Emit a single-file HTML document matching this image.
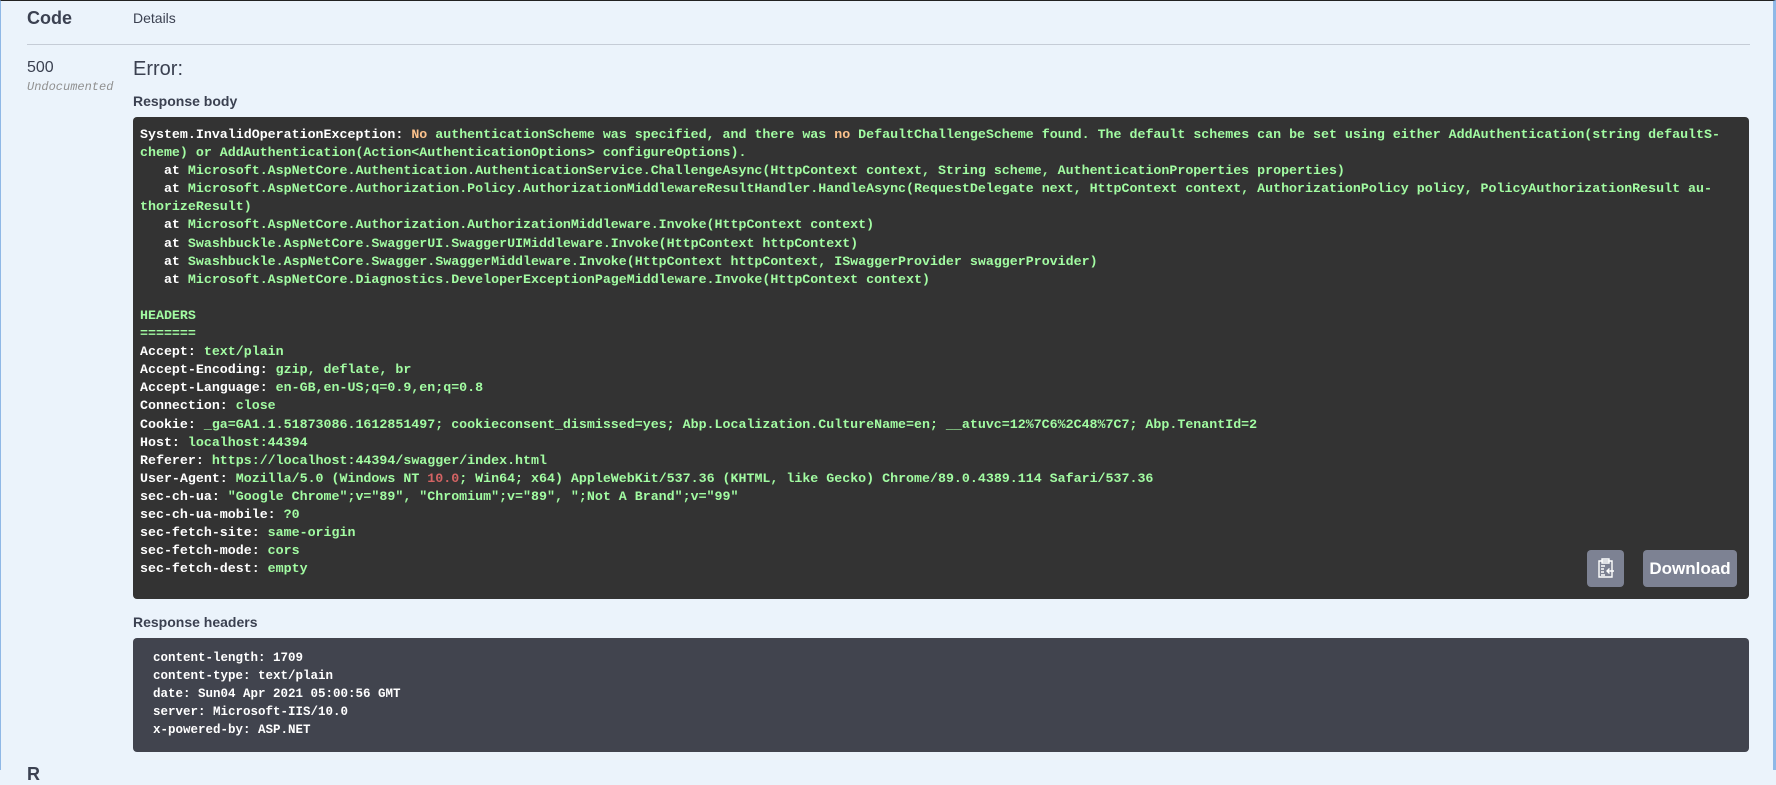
<!DOCTYPE html>
<html><head><meta charset="utf-8"><style>
*{margin:0;padding:0;box-sizing:border-box}
html,body{width:1776px;height:770px;overflow:hidden;background:#ebf3fb;font-family:"Liberation Sans",sans-serif;color:#3b4151}
.frame{position:absolute;left:0;top:0;width:1776px;height:770px;border-top:1px solid #222;border-left:1px solid #8fb8e6;border-right:3px solid #8fb8e6}
.abs{position:absolute}
pre{font-family:"Liberation Mono",monospace;font-weight:bold;font-size:13.3px;line-height:18.1px;white-space:pre}
.w{color:#fff}.g{color:#a2fca2}.o{color:#fcc28c}.r{color:#d36363}
</style></head><body>
<div class="frame"></div>
<div class="abs" style="left:27px;top:8px;font-size:18px;font-weight:bold">Code</div>
<div class="abs" style="left:133px;top:10px;font-size:14px">Details</div>
<div class="abs" style="left:27px;top:44px;width:1723px;height:1px;background:#c5ccd6"></div>
<div class="abs" style="left:27px;top:59px;font-size:16px">500</div>
<div class="abs" style="left:27px;top:80px;font-size:12px;font-style:italic;color:#909090;font-family:'Liberation Mono',monospace">Undocumented</div>
<div class="abs" style="left:133px;top:58px;font-size:20px">Error:</div>
<div class="abs" style="left:133px;top:93px;font-size:14px;font-weight:bold">Response body</div>
<div class="abs" style="left:133px;top:117px;width:1616px;height:482px;background:#333;border-radius:4px;padding:9px 7px;overflow:hidden">
<pre><span class="w">System.InvalidOperationException: </span><span class="o">No</span><span class="g"> authenticationScheme was specified, and there was </span><span class="o">no</span><span class="g"> DefaultChallengeScheme found. The default schemes can be set using either AddAuthentication(string defaultS-
cheme) or AddAuthentication(Action&lt;AuthenticationOptions&gt; configureOptions).</span>
<span class="w">   at </span><span class="g">Microsoft.AspNetCore.Authentication.AuthenticationService.ChallengeAsync(HttpContext context, String scheme, AuthenticationProperties properties)</span>
<span class="w">   at </span><span class="g">Microsoft.AspNetCore.Authorization.Policy.AuthorizationMiddlewareResultHandler.HandleAsync(RequestDelegate next, HttpContext context, AuthorizationPolicy policy, PolicyAuthorizationResult au-
thorizeResult)</span>
<span class="w">   at </span><span class="g">Microsoft.AspNetCore.Authorization.AuthorizationMiddleware.Invoke(HttpContext context)</span>
<span class="w">   at </span><span class="g">Swashbuckle.AspNetCore.SwaggerUI.SwaggerUIMiddleware.Invoke(HttpContext httpContext)</span>
<span class="w">   at </span><span class="g">Swashbuckle.AspNetCore.Swagger.SwaggerMiddleware.Invoke(HttpContext httpContext, ISwaggerProvider swaggerProvider)</span>
<span class="w">   at </span><span class="g">Microsoft.AspNetCore.Diagnostics.DeveloperExceptionPageMiddleware.Invoke(HttpContext context)</span>

<span class="g">HEADERS
=======</span>
<span class="w">Accept: </span><span class="g">text/plain</span>
<span class="w">Accept-Encoding: </span><span class="g">gzip, deflate, br</span>
<span class="w">Accept-Language: </span><span class="g">en-GB,en-US;q=0.9,en;q=0.8</span>
<span class="w">Connection: </span><span class="g">close</span>
<span class="w">Cookie: </span><span class="g">_ga=GA1.1.51873086.1612851497; cookieconsent_dismissed=yes; Abp.Localization.CultureName=en; __atuvc=12%7C6%2C48%7C7; Abp.TenantId=2</span>
<span class="w">Host: </span><span class="g">localhost:44394</span>
<span class="w">Referer: </span><span class="g">https://localhost:44394/swagger/index.html</span>
<span class="w">User-Agent: </span><span class="g">Mozilla/5.0 (Windows NT </span><span class="r">10.0</span><span class="g">; Win64; x64) AppleWebKit/537.36 (KHTML, like Gecko) Chrome/89.0.4389.114 Safari/537.36</span>
<span class="w">sec-ch-ua: </span><span class="g">"Google Chrome";v="89", "Chromium";v="89", ";Not A Brand";v="99"</span>
<span class="w">sec-ch-ua-mobile: </span><span class="g">?0</span>
<span class="w">sec-fetch-site: </span><span class="g">same-origin</span>
<span class="w">sec-fetch-mode: </span><span class="g">cors</span>
<span class="w">sec-fetch-dest: </span><span class="g">empty</span></pre>
</div>
<div class="abs" style="left:1587px;top:550px;width:37px;height:37px;background:#7d8293;border-radius:4px">
<svg width="37" height="37" viewBox="0 0 37 37" fill="none" stroke="#fff" stroke-width="1.4"><path d="M12 11h3v-2h7v2h3v16h-13z"/><path d="M15 11h7v2h-7z"/><path d="M14 16h4M14 19h3M14 22h3M14 25h4"/><path d="M27 21h-7M22.5 18.5l-2.5 2.5 2.5 2.5"/></svg>
</div>
<div class="abs" style="left:1643px;top:550px;width:94px;height:37px;background:#7d8293;border-radius:4px;color:#fff;font-weight:bold;font-size:17px;line-height:37px;text-align:center">Download</div>
<div class="abs" style="left:133px;top:614px;font-size:14px;font-weight:bold">Response headers</div>
<div class="abs" style="left:133px;top:638px;width:1616px;height:114px;background:#41444e;border-radius:4px;padding:11px 20px">
<pre style="color:#fff;font-weight:bold;font-size:12.5px">content-length: 1709
content-type: text/plain
date: Sun04 Apr 2021 05:00:56 GMT
server: Microsoft-IIS/10.0
x-powered-by: ASP.NET</pre>
</div>
<div class="abs" style="left:27px;top:764px;font-size:18px;font-weight:bold">R</div>
</body></html>
